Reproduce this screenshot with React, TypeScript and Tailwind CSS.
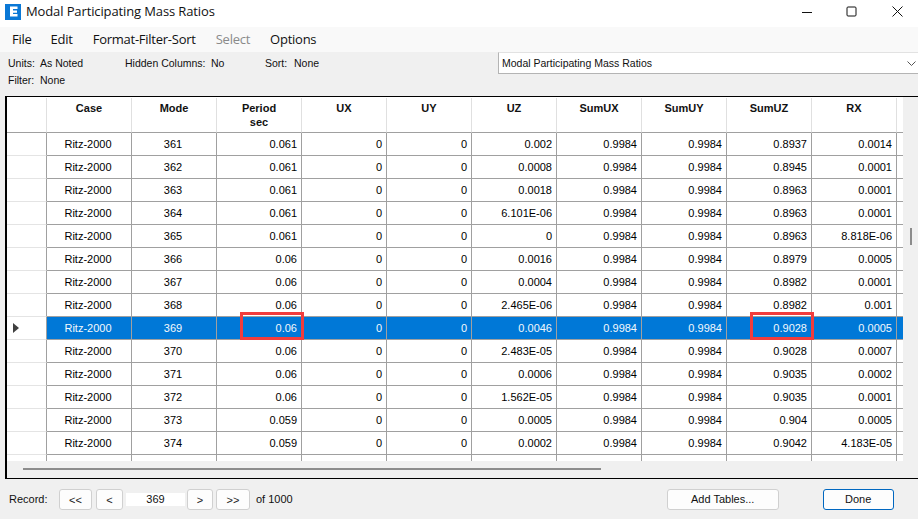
const ui = "font-['Open_Sans',sans-serif]"
const grid = "font-['Liberation_Sans',Arial,sans-serif]"

const headers = ["Case", "Mode", "Period", "UX", "UY", "UZ", "SumUX", "SumUY", "SumUZ", "RX"]

// mode, period, uz, sumuz, rx
const rows: [string, string, string, string, string][] = [
  ["361", "0.061", "0.002", "0.8937", "0.0014"],
  ["362", "0.061", "0.0008", "0.8945", "0.0001"],
  ["363", "0.061", "0.0018", "0.8963", "0.0001"],
  ["364", "0.061", "6.101E-06", "0.8963", "0.0001"],
  ["365", "0.061", "0", "0.8963", "8.818E-06"],
  ["366", "0.06", "0.0016", "0.8979", "0.0005"],
  ["367", "0.06", "0.0004", "0.8982", "0.0001"],
  ["368", "0.06", "2.465E-06", "0.8982", "0.001"],
  ["369", "0.06", "0.0046", "0.9028", "0.0005"],
  ["370", "0.06", "2.483E-05", "0.9028", "0.0007"],
  ["371", "0.06", "0.0006", "0.9035", "0.0002"],
  ["372", "0.06", "1.562E-05", "0.9035", "0.0001"],
  ["373", "0.059", "0.0005", "0.904", "0.0005"],
  ["374", "0.059", "0.0002", "0.9042", "4.183E-05"],
]

function Cell({ children, center, mark, selected }: { children?: React.ReactNode; center?: boolean; mark?: boolean; selected?: boolean }) {
  return (
    <div className={`relative h-[23px] border-r border-b border-[#a0a0a0] flex items-center text-[11px] ${center ? "justify-center pr-[2px]" : "justify-end pr-[4px]"} ${selected ? "bg-[#0078d7] text-[#f4f8fc]" : "text-black"}`}>
      {children}
      {mark && <div className="absolute left-[23px] top-[-5px] w-[64px] h-[28px] border-[3px] border-[#f23c3c] z-10" />}
    </div>
  )
}

function Row({ data }: { data: [string, string, string, string, string] }) {
  const [mode, period, uz, sumuz, rx] = data
  const selected = mode === "369"
  return (
    <div className="grid grid-cols-[40px_repeat(10,85px)_6px]">
      <div className="h-[23px] border-r border-b border-r-[#a0a0a0] border-b-[#e4e4e4] flex items-center pl-[6px]">
        {selected && (
          <svg width="6" height="10" viewBox="0 0 6 10"><path d="M0 0 L6 5 L0 10 Z" fill="#404040" /></svg>
        )}
      </div>
      <Cell center selected={selected}>Ritz-2000</Cell>
      <Cell center selected={selected}>{mode}</Cell>
      <Cell selected={selected} mark={selected}>{period}</Cell>
      <Cell selected={selected}>0</Cell>
      <Cell selected={selected}>0</Cell>
      <Cell selected={selected}>{uz}</Cell>
      <Cell selected={selected}>0.9984</Cell>
      <Cell selected={selected}>0.9984</Cell>
      <Cell selected={selected} mark={selected}>{sumuz}</Cell>
      <Cell selected={selected}>{rx}</Cell>
      <div className={`h-[23px] border-b border-[#a0a0a0] ${selected ? "bg-[#0078d7]" : ""}`} />
    </div>
  )
}

function NavButton({ label, w }: { label: string; w: string }) {
  return (
    <button className={`${w} h-[21px] rounded-[3px] border border-[#d0d0d0] bg-[#fdfdfd] text-[11px] text-[#222] pt-[2px]`}>{label}</button>
  )
}

export default function App() {
  return (
    <div className={`${ui} w-[918px] h-[519px] overflow-hidden bg-[#f0f0f0] flex flex-col`}>
      {/* title bar */}
      <div className="h-[27px] bg-white flex items-center pl-[5px] pb-[4px]">
        <svg width="16" height="16" viewBox="0 0 16 16">
          <rect width="16" height="16" fill="#0a78d6" />
          <path d="M5 2.5 H12.5 V5 H8 V6.5 H12 V8.7 H8 V10 H12.5 V12.5 H5 Z" fill="#fff" />
        </svg>
        <span className="ml-[5px] text-[13px] tracking-[-0.12px] text-[#111]">Modal Participating Mass Ratios</span>
        <div className="ml-auto flex items-center">
          <svg width="10" height="10" viewBox="0 0 10 10" className="mr-[34px]"><path d="M0 5.5 H10" stroke="#111" /></svg>
          <svg width="11" height="11" viewBox="0 0 11 11" className="mr-[35px]"><rect x="1" y="1" width="9" height="9" rx="1" fill="none" stroke="#111" /></svg>
          <svg width="11" height="11" viewBox="0 0 11 11" className="mr-[15px]"><path d="M0.5 0.5 L10.5 10.5 M10.5 0.5 L0.5 10.5" stroke="#111" /></svg>
        </div>
      </div>

      {/* menu */}
      <div className="h-[25px] bg-[#f9f9f9] flex items-center pl-[12px] text-[13px] tracking-[-0.25px] text-[#111]">
        <span>File</span>
        <span className="ml-[19px]">Edit</span>
        <span className="ml-[20px]">Format-Filter-Sort</span>
        <span className="ml-[20px] text-[#8a8a8a]">Select</span>
        <span className="ml-[20px]">Options</span>
      </div>

      {/* info strip */}
      <div className={`${grid} h-[44px] flex text-[10.5px] text-[#111]`}>
        <div className="w-[498px] pl-[8px] pt-[3px] leading-[17px]">
          <div className="flex">
            <span className="w-[32px]">Units:</span>
            <span className="w-[85px]">As Noted</span>
            <span className="w-[86px]">Hidden Columns:</span>
            <span className="w-[54px]">No</span>
            <span className="w-[29px]">Sort:</span>
            <span>None</span>
          </div>
          <div className="flex">
            <span className="w-[32px]">Filter:</span>
            <span>None</span>
          </div>
        </div>
        <div className="flex-1 h-[22px] bg-white border-l border-b border-t border-[#b4b4b4] border-t-[#e2e2e2] flex items-center pl-[3px] pt-[1px] text-[10.5px]">
          Modal Participating Mass Ratios
          <svg width="9" height="5" viewBox="0 0 9 5" className="ml-auto mr-[2px]"><path d="M0.5 0.5 L4.5 4.5 L8.5 0.5" fill="none" stroke="#555" /></svg>
        </div>
      </div>

      {/* table frame */}
      <div className={`${grid} h-[383px] border-t border-b border-l-2 border-black border-r-0 ml-[5px] flex`}>
        <div className="w-[896px] flex flex-col">
          <div className="h-[364px] bg-white overflow-hidden pt-px">
            <div className="grid grid-cols-[40px_repeat(10,85px)_6px]">
              <div className="h-[35px] border-r border-r-[#e0e0e0] border-b border-b-[#a0a0a0]" />
              {headers.map((h) => (
                <div key={h} className="h-[35px] border-r border-r-[#e0e0e0] border-b border-b-[#a0a0a0] text-center font-bold text-[11px] leading-[14px] pt-[3px] text-[#111]">
                  {h}
                  {h === "Period" && <div>sec</div>}
                </div>
              ))}
              <div className="h-[35px] border-b border-[#a0a0a0]" />
            </div>
            {rows.map((r) => (
              <Row key={r[0]} data={r} />
            ))}
            <div className="grid grid-cols-[40px_repeat(10,85px)_6px]">
              <div className="h-[23px] border-r border-[#a0a0a0]" />
              {headers.map((h) => (
                <div key={h} className="h-[23px] border-r border-[#a0a0a0]" />
              ))}
            </div>
          </div>
          <div className="flex-1 pl-[16px] pt-[7px]">
            <div className="w-[578px] h-[2px] bg-[#8c8c8c]" />
          </div>
        </div>
        <div className="flex-1 pl-[7px] pt-[131px]">
          <div className="w-[2px] h-[17px] bg-[#8c8c8c]" />
        </div>
      </div>

      {/* record bar */}
      <div className={`${grid} flex-1 flex items-center pl-[9px] pt-[1px] text-[11px] text-[#111]`}>
        <span className="w-[50px]">Record:</span>
        <NavButton label="<<" w="w-[33px]" />
        <div className="w-[4px]" />
        <NavButton label="<" w="w-[27px]" />
        <div className="ml-[3px] w-[59px] h-[13px] bg-white flex items-center justify-center">369</div>
        <div className="w-[2px]" />
        <NavButton label=">" w="w-[26px]" />
        <div className="w-[3px]" />
        <NavButton label=">>" w="w-[34px]" />
        <span className="ml-[6px]">of 1000</span>
        <button className="ml-[374px] w-[112px] h-[21px] rounded-[3px] border border-[#d0d0d0] bg-[#fdfdfd] text-[11px]">Add Tables...</button>
        <button className="ml-[44px] w-[71px] h-[21px] rounded-[3px] border border-[#0067c0] bg-[#fdfdfd] text-[11px]">Done</button>
      </div>
    </div>
  )
}
